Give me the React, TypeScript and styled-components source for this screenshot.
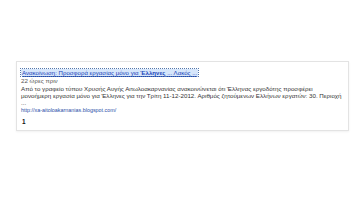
import React from 'react';
import styled, { createGlobalStyle } from 'styled-components';

const GlobalStyle = createGlobalStyle`
  html, body {
    margin: 0;
    padding: 0;
    background: #ffffff;
  }
  body {
    font-family: "Liberation Sans", Arial, sans-serif;
  }
`;

const Page = styled.div`
  width: 360px;
  height: 200px;
  padding: 61px 11px 0 16px;
  box-sizing: border-box;
`;

const Card = styled.div`
  width: 333px;
  box-sizing: border-box;
  border: 1px solid #e3e3e3;
  box-shadow: 0 1px 2px rgba(0, 0, 0, 0.06);
  padding: 7px 4px 5px 4px;
  background: #fff;
  font-size: 6.2px;
  line-height: 7px;
`;

const TitleRow = styled.div`
  display: flex;
`;

const Title = styled.a`
  font-size: 6.1px;
  line-height: 7px;
  color: #1a44b8;
  text-decoration: underline;
  background: #d6e6fb;
  outline: 1px dotted #5577aa;
  padding: 0 1px;

  b {
    font-weight: 700;
  }
`;

const Meta = styled.div`
  color: #555;
  margin-top: 1px;
`;

const Snippet = styled.div`
  color: #333;
  margin-top: 1px;
`;

const Url = styled.div`
  font-size: 5.4px;
  color: #2a4ea8;
  margin-top: 1px;
`;

const Pager = styled.div`
  font-size: 6.4px;
  font-weight: 700;
  color: #111;
  margin-top: 4px;
  padding-left: 1px;
`;

export default function App() {
  return (
    <>
      <GlobalStyle />
      <Page>
        <Card>
          <TitleRow>
            <Title href="#">
              Ανακοίνωση: Προσφορά εργασίας μόνο για <b>Έλληνες</b> ... Λακός ...
            </Title>
          </TitleRow>
          <Meta>22 ώρες πριν</Meta>
          <Snippet>
            Από το γραφείο τύπου Χρυσής Αυγής Αιτωλοακαρνανίας ανακοινώνεται ότι Έλληνας εργοδότης προσφέρει
            <br />
            μονοήμερη εργασία μόνο για Έλληνες για την Τρίτη 11-12-2012. Αριθμός ζητούμενων Ελλήνων εργατών: 30. Περιοχή
            <br />
            ...
          </Snippet>
          <Url>http://xa-aitoloakarnanias.blogspot.com/</Url>
          <Pager>1</Pager>
        </Card>
      </Page>
    </>
  );
}
